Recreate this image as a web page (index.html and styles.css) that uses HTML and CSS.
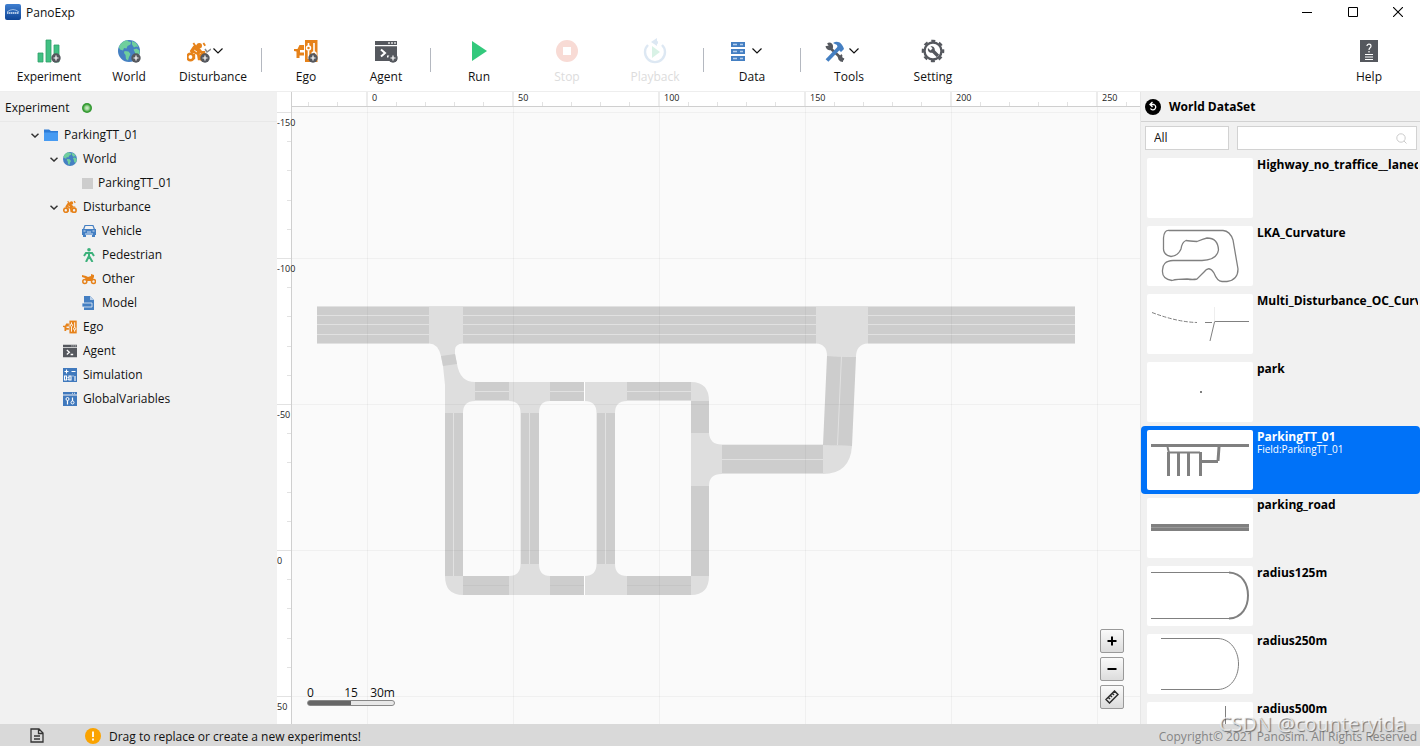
FILE: index.html
```html
<!DOCTYPE html>
<html lang="en">
<head>
<meta charset="utf-8">
<title>PanoExp</title>
<link rel="stylesheet" href="styles.css">
</head>
<body>
<svg class="defs" aria-hidden="true">
  <defs>
    <linearGradient id="logo-fill" x1="0" y1="0" x2="0" y2="1"><stop offset="0" stop-color="#3f7fd0"/><stop offset="1" stop-color="#0f4596"/></linearGradient>
    <radialGradient id="led-fill"><stop offset="0" stop-color="#d4f0cf"/><stop offset=".4" stop-color="#9bd495"/><stop offset=".75" stop-color="#3a9f37"/><stop offset="1" stop-color="#2f9430"/></radialGradient>
    <symbol id="plus-badge" viewBox="0 0 10 10"><circle cx="5" cy="5" r="4.700" fill="#55585e"/><path d="M5 2.500v5M2.500 5h5" stroke="#fff" stroke-width="1.200"/></symbol>
    <symbol id="globe" viewBox="0 0 22 22"><circle cx="11" cy="11" r="11" fill="#4580c2"/><path d="M3 3.500C5 1.500 7 .6 9 .3L10.500 1.500 13 2l-.5 2.500-3 1.500-1 2.500L6 8 5 10.500 2 9.500.8 7zM14 1l4 2 2.500 4-2.500-.5-2 1-2-3zM6.500 11l4 .5 2 2.500-1.500 3-1 3.500-2-1.500L7.500 15 6 13zM15.500 9.500l3-1 3 2v3l-2 4-2-2-.5-3z" fill="#6fcf9d"/></symbol>
    <symbol id="cyclist" viewBox="0 0 24 22"><circle cx="4.800" cy="16.500" r="3.500" fill="none" stroke="#e6821a" stroke-width="2.800"/><circle cx="19" cy="16.500" r="3.500" fill="none" stroke="#e6821a" stroke-width="2.800"/><circle cx="14.500" cy="4" r="3" fill="#e6821a"/><path d="M4 10l4-6 3-1 4 4 3 4-3 2 1 7h-3l-1-6-4-2-2 1z" fill="#e6821a"/><path d="M14 8l3 3h4M8 1l2 3M19 1l2 3M9 13v6" fill="none" stroke="#e6821a" stroke-width="2"/><path d="M9 9l3 2" stroke="#fff" stroke-width="1"/></symbol>
    <symbol id="ego" viewBox="0 0 24 22"><path d="M11 0h12.500v22H11z" fill="#e6821a"/><path d="M10 5H5.500L3.500 9H0v2l2.500.5V18h3v-2.500H10v-3H6V10h4z" fill="#e6821a"/><path d="M14.500 3v3.500m0 4V19M20 3v9m0 4v3" stroke="#fff" stroke-width="1.600"/><circle cx="14.500" cy="8" r="2" fill="none" stroke="#fff" stroke-width="1.500"/><circle cx="20" cy="14" r="2" fill="none" stroke="#fff" stroke-width="1.500"/></symbol>
    <symbol id="terminal" viewBox="0 0 22 20"><path d="M0 0h22v4H0zM0 5.200h22V20H0z" fill="#55585e"/><path d="M13 2h2M16 2h2M19 2h2" stroke="#ddd" stroke-width="1.300"/><path d="M6 8.500l4 3.500-4 3.500M12 15.500h4" fill="none" stroke="#fff" stroke-width="2"/></symbol>
    <symbol id="chevron" viewBox="0 0 10 6"><path d="M.5.5L5 5 9.500.5" fill="none" stroke="currentColor" stroke-width="1.200"/></symbol>
    <symbol id="chevron-bold" viewBox="0 0 8 5"><path d="M.5.7L4 4 7.500.7" fill="none" stroke="#333" stroke-width="1.500"/></symbol>
    <symbol id="window-vars" viewBox="0 0 14 14"><path d="M0 0h14v2.500H0zM0 3.500h14V14H0z" fill="#4079bd"/><path d="M9 1.300h1M11 1.300h1" stroke="#fff" stroke-width=".8"/><circle cx="4.500" cy="7" r="1.500" fill="none" stroke="#fff"/><path d="M4.500 8.500V12.500M9.500 5.500V9" fill="none" stroke="#fff" stroke-width="1.200"/><circle cx="9.500" cy="10.500" r="1.500" fill="none" stroke="#fff"/></symbol>
  </defs>
</svg>

<div class="app">
  <header class="titlebar">
    <svg class="logo" viewBox="0 0 16 16"><rect width="16" height="16" rx="2" fill="url(#logo-fill)"/><path d="M2 8q6-5 12 0" fill="none" stroke="#b5cfee" stroke-width=".8"/><path d="M2 9h12" stroke="#dce8f7" stroke-width="1.500" stroke-dasharray="1.500 .5"/></svg>
    <h1 class="title">PanoExp</h1>
    <div class="window-controls">
      <button class="window-button" aria-label="Minimize"><svg width="10" height="10"><path d="M0 5.500h10" stroke="#000"/></svg></button>
      <button class="window-button" aria-label="Maximize"><svg width="10" height="10"><path d="M.5.5h9v9h-9z" fill="none" stroke="#000"/></svg></button>
      <button class="window-button" aria-label="Close"><svg width="10" height="10"><path d="M0 0l10 10M10 0L0 10" stroke="#000" stroke-width="1.100"/></svg></button>
    </div>
  </header>

  <nav class="toolbar" aria-label="Main">
    <button class="tool"><span class="tool-icon"><svg width="24" height="24"><path d="M1 14h5v9H1zM9 1h5v22H9zM17 6h5v17h-5z" fill="#41c083" stroke="#2f9e68" stroke-width=".8"/><use href="#plus-badge" x="14" y="14" width="10" height="10"/></svg></span>Experiment</button>
    <button class="tool"><span class="tool-icon"><svg width="24" height="24"><use href="#globe" x="1" y="1" width="22" height="22"/><use href="#plus-badge" x="14" y="14" width="10" height="10"/></svg></span>World</button>
    <button class="tool wide"><span class="tool-icon with-menu"><svg width="24" height="24"><use href="#cyclist" x="-1" y="3" width="22" height="20"/><path d="M18 10l2 3 4-3" fill="none" stroke="#888" stroke-width="1.500"/><use href="#plus-badge" x="13" y="14" width="10" height="10"/></svg><svg class="caret"><use href="#chevron"/></svg></span>Disturbance</button>
    <span class="separator"></span>
    <button class="tool"><span class="tool-icon"><svg width="24" height="24"><use href="#ego" x="0" y="1" width="24" height="22"/><use href="#plus-badge" x="14" y="14" width="10" height="10"/></svg></span>Ego</button>
    <button class="tool"><span class="tool-icon"><svg width="24" height="24"><use href="#terminal" x="1" y="2" width="22" height="20"/><use href="#plus-badge" x="14" y="14" width="10" height="10"/></svg></span>Agent</button>
    <span class="separator"></span>
    <button class="tool wide"><span class="tool-icon"><svg width="24" height="24"><path d="M5 2l15 10L5 22z" fill="#33c97c"/></svg></span>Run</button>
    <button class="tool wide" disabled><span class="tool-icon"><svg width="24" height="24"><circle cx="12" cy="12" r="11" fill="#f8dbd5"/><path d="M8 8h8v8H8z" fill="#fff"/></svg></span>Stop</button>
    <button class="tool wide" disabled><span class="tool-icon"><svg width="24" height="26"><path d="M5 7A10 10 0 1 0 19 7M12 4.500h3" fill="none" stroke="#dde8f3" stroke-width="2.400"/><path d="M9 8l8 6-8 6z" fill="#d9f2e6"/><path d="M8 4l6-4v8z" fill="#dde8f3"/></svg></span>Playback</button>
    <span class="separator"></span>
    <button class="tool wide"><span class="tool-icon with-menu"><svg width="24" height="24"><path d="M5 3h14v5H5zM5 10h14v5H5zM5 17h14v5H5z" fill="#447fc2"/><path d="M7 5.500h4M14 5.500h3M7 12.500h4M14 12.500h3M7 19.500h4M14 19.500h3" stroke="#b7d0ed" stroke-width="1.400"/></svg><svg class="caret"><use href="#chevron"/></svg></span>Data</button>
    <span class="separator"></span>
    <button class="tool wide"><span class="tool-icon with-menu"><svg width="24" height="24"><path d="M6 8l12 11" stroke="#55585e" stroke-width="2.600"/><path d="M5 4l2 3-3 1.500M3.500 7c1 4 5 4 5.500 1 0-2-1-3.500-3-3.500M21 20.500c-3-1-4-3-2-4.500M16 16c-1 3 1 6 4 6" fill="none" stroke="#55585e" stroke-width="2.200"/><path d="M4 21.500L16 9" stroke="#447fc2" stroke-width="3.800"/><path d="M10 4c5-3 9 0 11 6l-3 3-3-3-1-4z" fill="#447fc2"/></svg><svg class="caret"><use href="#chevron"/></svg></span>Tools</button>
    <button class="tool"><span class="tool-icon"><svg width="24" height="24"><circle cx="12" cy="12" r="8.500" fill="none" stroke="#55585e" stroke-width="2.400"/><circle cx="12" cy="12" r="10.200" fill="none" stroke="#55585e" stroke-width="2.200" stroke-dasharray="4 4.010" stroke-dashoffset="2"/><path d="M11 11l6 6" stroke="#55585e" stroke-width="3.400"/><path d="M7 9c-1 4 3 6 6 4 2-3 0-6-3.500-6l2 2.500-2 2z" fill="#55585e"/></svg></span>Setting</button>
    <button class="tool help"><span class="tool-icon"><svg width="24" height="24"><path d="M3 1h18v22H3z" fill="#55585e"/><path d="M10 7c0-2.500 4-2.500 4 0 0 2-2 1.500-2 4M12 12v1.500M8 15.500h8M8 18h8M8 20.500h8" fill="none" stroke="#fff" stroke-width="1.200"/></svg></span>Help</button>
  </nav>

  <main class="workspace">
    <aside class="explorer">
      <h2 class="panel-title explorer-title">Experiment <svg class="led" viewBox="0 0 10 10"><circle cx="5" cy="5" r="5" fill="url(#led-fill)"/></svg></h2>
      <ul class="tree">
        <li><div class="node"><button class="toggle" aria-label="Collapse ParkingTT_01"><svg class="caret small"><use href="#chevron-bold"/></svg></button><svg class="node-icon" viewBox="0 0 14 14"><path d="M0 1.500h5L7 3h7v10H0z" fill="#2e7cd6"/><path d="M0 4.500h14V13H0z" fill="#479bf2"/></svg>ParkingTT_01</div>
          <ul>
            <li><div class="node"><button class="toggle" aria-label="Collapse World"><svg class="caret small"><use href="#chevron-bold"/></svg></button><svg class="node-icon"><use href="#globe"/></svg>World</div>
              <ul>
                <li><div class="node"><span class="toggle"></span><svg class="node-icon swatch" viewBox="0 0 11 11"><path d="M0 0h11v11H0z" fill="#cdcdcd"/></svg>ParkingTT_01</div></li>
              </ul>
            </li>
            <li><div class="node"><button class="toggle" aria-label="Collapse Disturbance"><svg class="caret small"><use href="#chevron-bold"/></svg></button><svg class="node-icon"><use href="#cyclist"/></svg>Disturbance</div>
              <ul>
                <li><div class="node"><span class="toggle"></span><svg class="node-icon" viewBox="0 0 14 14"><path d="M3 1.500h8l1.500 4h-11z" fill="#f1f1f1" stroke="#447fc2" stroke-width="1.200"/><path d="M0 5h14v6H0zM1 11h3v2H1zM10 11h3v2h-3z" fill="#447fc2"/><path d="M1.500 7h2M5 8h4M10.500 7h2M3 10h8" stroke="#d4e2f3"/></svg>Vehicle</div></li>
                <li><div class="node"><span class="toggle"></span><svg class="node-icon" viewBox="0 0 14 14"><circle cx="7" cy="1.800" r="1.800" fill="#3cb17b"/><path d="M2 8l2-3h6l2 3M7 4v5M7 8l-3 6M7 8l3.500 6" fill="none" stroke="#3cb17b" stroke-width="2"/></svg>Pedestrian</div></li>
                <li><div class="node"><span class="toggle"></span><svg class="node-icon" viewBox="0 0 14 14"><path d="M0 3l4 1 2 1 3-1V2l3 1v2l-2 4H4L3 6 0 5z" fill="#e6821a"/><circle cx="2.800" cy="9.500" r="2" fill="none" stroke="#e6821a" stroke-width="1.500"/><circle cx="11.500" cy="9.500" r="2" fill="none" stroke="#e6821a" stroke-width="1.500"/></svg>Other</div></li>
                <li><div class="node"><span class="toggle"></span><svg class="node-icon" viewBox="0 0 14 14"><path d="M2 0h6l4 4v10H2z" fill="#447fc2"/><path d="M8 0v4h4" fill="#b8cfe9"/><path d="M0 7h10v4H0z" fill="#447fc2" stroke="#e9eff6" stroke-width=".8"/></svg>Model</div></li>
              </ul>
            </li>
            <li><div class="node"><span class="toggle"></span><svg class="node-icon"><use href="#ego"/></svg>Ego</div></li>
            <li><div class="node"><span class="toggle"></span><svg class="node-icon"><use href="#terminal"/></svg>Agent</div></li>
            <li><div class="node"><span class="toggle"></span><svg class="node-icon" viewBox="0 0 14 14"><path d="M0 0h14v14H0z" fill="#4079bd"/><path d="M1.500 3.500h4M3.500 1.500v4M8.500 3.500h4M1.500 8h2v4h-2zM6 8h2v4H6zM9.500 8h1M12 8v5M5 9v.8M5 11v.8" fill="none" stroke="#fff" stroke-width="1.100"/></svg>Simulation</div></li>
            <li><div class="node"><span class="toggle"></span><svg class="node-icon"><use href="#window-vars"/></svg>GlobalVariables</div></li>
          </ul>
        </li>
      </ul>
    </aside>

    <section class="canvas" aria-label="Road map">
      <svg class="map">
        <defs>
          <pattern id="grid" x="90" y="20" width="146" height="146" patternUnits="userSpaceOnUse"><path d="M.5 0v146M0 .5h146" stroke="#000" stroke-opacity=".04" fill="none"/></pattern>
          <pattern id="ticks-x" x="31" y="10" width="146" height="5" patternUnits="userSpaceOnUse"><path d="M.5 0v5M29.500 0v5M88.500 0v5M117.500 0v5" stroke="#e2e2e2"/></pattern>
          <pattern id="major-x" x="89" y="0" width="146" height="15" patternUnits="userSpaceOnUse"><path d="M1 0v15" stroke="#ececec" stroke-width="2"/></pattern>
          <pattern id="ticks-y" x="10" y="20" width="5" height="146" patternUnits="userSpaceOnUse"><path d="M0 29.500h5M0 58.500h5M0 88.500h5M0 117.500h5" stroke="#e2e2e2"/></pattern>
          <pattern id="major-y" x="0" y="20" width="15" height="146" patternUnits="userSpaceOnUse"><path d="M0 .5h15" stroke="#e2e2e2"/></pattern>
        </defs>
        <g transform="translate(-277 -92)">
          <path fill="#dedede" fill-rule="evenodd" d="M429 306H463V343.500Q455 344 455 350V354L457 364Q460 382 475 382H691Q709 382 709 401V433Q710 444.500 721.500 444.500H823L852 446Q850 474 823 474H721.500Q709 474 709 486V576Q709 595 691 595H463Q445 595 445 576V385L443 366 441 356Q438 343.500 429 343.500ZM463 413V576H509Q520.500 576 520.500 564V413Q520.500 401 509 401H475Q463 401 463 413ZM539 413V564Q539 576 550 576H584.500Q596.500 576 596.500 564V413Q596.500 401 584.500 401H550Q539 401 539 413ZM615 413V564Q615 576 627 576H691V401H627Q615 401 615 413Z"/>
          <path fill="#dedede" d="M816 306H868V343.500Q856 344 856 357L827 356Q827 344 816 343.500Z"/>
          <path fill="#cdcdcd" d="M317 306H429V343.500H317ZM463 306H816V343.500H463ZM868 306H1075V343.500H868ZM441 356L455 354 457 364 443 366ZM475 382H509V401H475ZM550 382H584V401H550ZM627 382H691V401H627ZM445 413H463V576H445ZM521 413H539V564H521ZM597 413H615V564H597ZM691 401H709V433H691ZM691 486H709V576H691ZM463 576H509V595H463ZM550 576H584V595H550ZM627 576H691V595H627ZM722 445H823V474H722ZM827 356L856 357 852 446 823 445Z"/>
          <path fill="none" stroke="#e1e1e1" d="M317 306.500H1075M317 315.500H429M463 315.500H816M868 315.500H1075M317 324.500H429M463 324.500H816M868 324.500H1075M317 334.500H429M463 334.500H816M868 334.500H1075M317 343.500H429M463 343.500H816M868 343.500H1075M475 391.500H509M550 391.500H584M627 391.500H691M453.500 413V576M529.500 413V564M605.500 413V564M722 459.500H823M841.500 356L837.500 445M722 473.500H823M475 400.500H509M627 400.500H691"/>
          <path fill="none" stroke="#c5c5c5" d="M463 585.500H509M550 585.500H584M627 585.500H691"/>
          <path stroke="#fff" d="M584.500 382V401M584.500 576V595"/>
        </g>
        <rect width="100%" height="100%" fill="url(#grid)"/>
        <rect width="100%" height="14" fill="#fff"/>
        <rect width="14" height="100%" fill="#fff"/>
        <svg x="14" width="100%" height="15"><g transform="translate(-14 0)"><rect width="100%" height="15" fill="url(#major-x)"/><rect y="10" width="100%" height="5" fill="url(#ticks-x)"/></g></svg>
        <svg y="15" width="15" height="100%"><g transform="translate(0 -15)"><rect width="15" height="100%" fill="url(#major-y)"/><rect x="10" width="5" height="100%" fill="url(#ticks-y)"/></g></svg>
        <path d="M14.500 0V3000M14 14.500H4000" stroke="#cfcfcf"/>
        <g class="ruler-text">
          <text x="95" y="9">0</text><text x="241" y="9">50</text><text x="387" y="9">100</text><text x="533" y="9">150</text><text x="679" y="9">200</text><text x="825" y="9">250</text>
          <text x="0" y="34">-150</text><text x="0" y="180">-100</text><text x="0" y="326">-50</text><text x="0" y="472">0</text><text x="0" y="618">50</text>
        </g>
      </svg>
      <div class="scale">
        <div class="scale-labels"><span>0</span><span class="scale-mid">15</span><span>30m</span></div>
        <div class="scale-bar"></div>
      </div>
      <div class="zoom-controls">
        <button class="zoom-button" aria-label="Zoom in"><svg width="10" height="10"><path d="M5 .5v9M.5 5h9" stroke="#000" stroke-width="2"/></svg></button>
        <button class="zoom-button" aria-label="Zoom out"><svg width="10" height="10"><path d="M.5 5h9" stroke="#000" stroke-width="2"/></svg></button>
        <button class="zoom-button" aria-label="Measure"><svg width="14" height="14"><path d="M1 9.500L9.500 1 13 4.500 4.500 13zM3.500 7.500l1.500 1.500M5.500 5.500L7 7M7.500 3.500L9 5" fill="none" stroke="#2c2c2c" stroke-width="1.500"/></svg></button>
      </div>
    </section>

    <aside class="dataset">
      <h2 class="panel-title dataset-title"><svg width="16" height="16"><circle cx="8" cy="8" r="8" fill="#000"/><path d="M5 5.500h4a2.800 2.800 0 1 1-3.500 4M7.500 3L5 5.500 7.500 8" fill="none" stroke="#fff" stroke-width="1.300"/></svg>World DataSet</h2>
      <div class="filters">
        <select class="filter-select" aria-label="Category"><option>All</option></select>
        <label class="search"><input type="text" aria-label="Search"><svg width="11" height="11"><circle cx="5" cy="5" r="4.200" fill="none" stroke="#ccc"/><path d="M8 8l2.500 2.500" stroke="#ccc"/></svg></label>
      </div>
      <ul class="datasets">
        <li class="item"><svg class="thumb"></svg><div class="item-text"><h3>Highway_no_traffice__lanechange</h3></div></li>
        <li class="item"><svg class="thumb"><path stroke-width="1.300" d="M22 4.500H76Q83 5 86 14L91 43Q91 54 80 55.500H75Q70 55 67 47 62 39 57 46L50 53Q46 54 40 53 30 53 25 54.500 15 53 15.500 45 15 35 26 34.500H55Q70 34 71.500 24 71 12 60 12 56 13 50 15.500 42 15 39 14.500 35 16 34 23 31 30 24 30.500 16 29 16.500 22V12Q17 4 22 4.500Z"/></svg><div class="item-text"><h3>LKA_Curvature</h3></div></li>
        <li class="item"><svg class="thumb"><path d="M5 18.500Q30 28 50 28.500" stroke-dasharray="4 1.500"/><path d="M58 28.500h7M67.500 27.500H102M67.500 28L63 47"/><path d="M67.500 13v14" stroke="#eee"/></svg><div class="item-text"><h3>Multi_Disturbance_OC_Curve</h3></div></li>
        <li class="item"><svg class="thumb"><path d="M53 30h2" stroke-width="2"/></svg><div class="item-text"><h3>park</h3></div></li>
        <li class="item selected"><svg class="thumb"><path d="M4 15.500H102" stroke-width="3"/><path d="M20.500 17l1.500 6M22 22.500H53" stroke-width="2"/><path d="M21.500 22V46M31.500 22V46M41.500 22V46M53.500 22V46M72 17L71 31M54 31.500H71" stroke-width="3"/></svg><div class="item-text"><h3>ParkingTT_01</h3><p>Field:ParkingTT_01</p></div></li>
        <li class="item"><svg class="thumb"><path d="M4 29.500H102" stroke-width="7"/><path d="M4 29.500H102" stroke="#999"/></svg><div class="item-text"><h3>parking_road</h3></div></li>
        <li class="item"><svg class="thumb"><path d="M4 6.500H84M4 52.500H84"/><path d="M82 6.500C95 7 101 18 101 29.500S95 52 82 52.500" stroke-width="2"/></svg><div class="item-text"><h3>radius125m</h3></div></li>
        <li class="item"><svg class="thumb"><path d="M14 4.500H71C84 5 91.500 17 91.500 30S84 55 71 55.500H14"/></svg><div class="item-text"><h3>radius250m</h3></div></li>
        <li class="item"><svg class="thumb"><path d="M78.500 4V30"/></svg><div class="item-text"><h3>radius500m</h3></div></li>
      </ul>
    </aside>
  </main>

  <footer class="statusbar">
    <svg class="doc" width="14" height="16"><path d="M1 1h8l4 4v9H1zM8.500 1v4.500H13M4 8h6M4 11h6" fill="none" stroke="#333" stroke-width="1.300"/></svg>
    <svg width="16" height="16"><circle cx="8" cy="8" r="8" fill="#faa300"/><path d="M8 3.500V9M8 10.500v2" stroke="#fff" stroke-width="1.800"/></svg>
    <span class="message">Drag to replace or create a new experiments!</span>
    <span class="message copyright">Copyright© 2021 Panosim. All Rights Reserved</span>
  </footer>
  <div class="watermark">CSDN @counteryida</div>
</div>
</body>
</html>
```
FILE: styles.css
```css
* { box-sizing: border-box; }

body {
  margin: 0;
  font-family: "Open Sans", "Noto Sans", sans-serif;
  font-size: 12px;
  line-height: 16px;
  color: #111;
}

h1, h2, h3, p, ul { margin: 0; padding: 0; font-size: inherit; font-weight: inherit; list-style: none; }

button, input, select { font: inherit; color: inherit; }

button { padding: 0; border: 0; background: none; }

.defs { position: absolute; width: 0; height: 0; }

.app {
  position: relative;
  display: flex;
  flex-direction: column;
  height: 100vh;
  overflow: hidden;
  background: #fff;
}

.titlebar { display: flex; align-items: center; flex: none; height: 24px; padding-left: 5px; gap: 5px; }
.title { padding-top: 2px; }
.logo { width: 16px; height: 16px; }
.window-controls { display: flex; margin-left: auto; }
.window-button { display: grid; place-items: center; width: 46px; height: 24px; }
.window-button:last-child { width: 44px; }

.toolbar { display: flex; align-items: flex-start; flex: none; height: 68px; padding: 15px 11px 0 9px; border-bottom: 1px solid #eee; }
.tool { display: flex; flex-direction: column; align-items: center; gap: 6px; width: 80px; }
.tool.wide { width: 88px; }
.tool:disabled { color: #dcdcdc; }
.tool.help { margin-left: auto; }
.tool-icon { display: flex; align-items: center; gap: 2px; height: 24px; }
.tool-icon.with-menu { margin-right: 16px; }
.separator { width: 1px; height: 24px; margin: 9px 4px 0; background: #b4b8c0; }
.caret { width: 10px; height: 6px; }
.caret.small { width: 8px; height: 5px; }

.workspace { display: flex; flex: 1; min-height: 0; }

.explorer { flex: none; width: 277px; background: #f1f1f1; }
.panel-title { display: flex; align-items: center; height: 30px; padding-left: 5px; border-bottom: 1px solid #e8e8e8; }
.explorer-title { padding-top: 2px; }
.led { width: 10px; height: 10px; margin-left: 13px; }
.tree { padding: 1px 0 0 25px; }
.tree ul { padding-left: 19px; }
.node { display: flex; align-items: center; height: 24px; }
.toggle { display: grid; place-items: center; width: 19px; height: 24px; }
.node-icon { width: 14px; height: 14px; margin-right: 6px; }
.node-icon.swatch { width: 11px; height: 11px; margin-right: 5px; }

.canvas { position: relative; flex: 1; min-width: 0; background: #fafafa; overflow: hidden; }
.map { display: block; width: 100%; height: 100%; }
.ruler-text { font-size: 9px; fill: #222; }
.scale { position: absolute; left: 30px; bottom: 18px; width: 88px; }
.scale-labels { display: flex; justify-content: space-between; line-height: 14px; }
.scale-mid { padding-left: 18px; }
.scale-bar { height: 6px; border: 1px solid #888; border-radius: 3px; background: linear-gradient(90deg, #666 50%, #e8e8e8 50%); }
.zoom-controls { position: absolute; right: 16px; bottom: 15px; display: flex; flex-direction: column; gap: 4px; }
.zoom-button { display: grid; place-items: center; width: 24px; height: 24px; border: 1px solid #999; border-radius: 2px; background: linear-gradient(#fafafa, #dcdcdc); }

.dataset { display: flex; flex-direction: column; flex: none; width: 280px; border-left: 1px solid #e6e6e6; background: #f1f1f1; }
.dataset-title { flex: none; gap: 8px; padding-left: 4px; border-color: #d2d2d2; color: #000; font-weight: 700; }
.filters { display: flex; flex: none; gap: 8px; padding: 4px 3px 4px 4px; }
.filter-select { width: 86px; height: 24px; padding: 0 8px; border: 1px solid #d2d2d2; border-radius: 0; background: #fff; appearance: none; }
.search { display: flex; align-items: center; flex: 1; height: 24px; padding-right: 9px; border: 1px solid #d2d2d2; background: #fff; }
.search input { flex: 1; min-width: 0; border: 0; outline: 0; background: none; }
.datasets { flex: 1; min-height: 0; overflow: hidden; }
.item { display: flex; gap: 4px; height: 68px; padding: 4px 2px 4px 6px; border-radius: 4px; color: #000; }
.thumb { flex: none; width: 106px; height: 60px; border-radius: 2px; background: #fff; fill: none; stroke: #808080; }
.item-text { min-width: 0; overflow: hidden; line-height: 13px; white-space: nowrap; }
.item-text h3 { font-weight: 700; }
.item-text p { font-size: 10px; }
.item.selected { background: #0072f8; color: #fff; }

.statusbar { display: flex; align-items: center; flex: none; height: 22px; padding: 2px 3px 0 30px; gap: 8px; background: #d9d9d9; }
.doc { margin-right: 33px; }
.message { padding-top: 2px; }
.copyright { margin-left: auto; color: #858585; }

.watermark {
  position: absolute;
  right: 14px;
  bottom: 8px;
  font-size: 20px;
  line-height: 28px;
  color: rgba(255, 255, 255, .7);
  text-shadow: 1px 1px 1px rgba(80, 80, 80, .8);
  pointer-events: none;
}
```
